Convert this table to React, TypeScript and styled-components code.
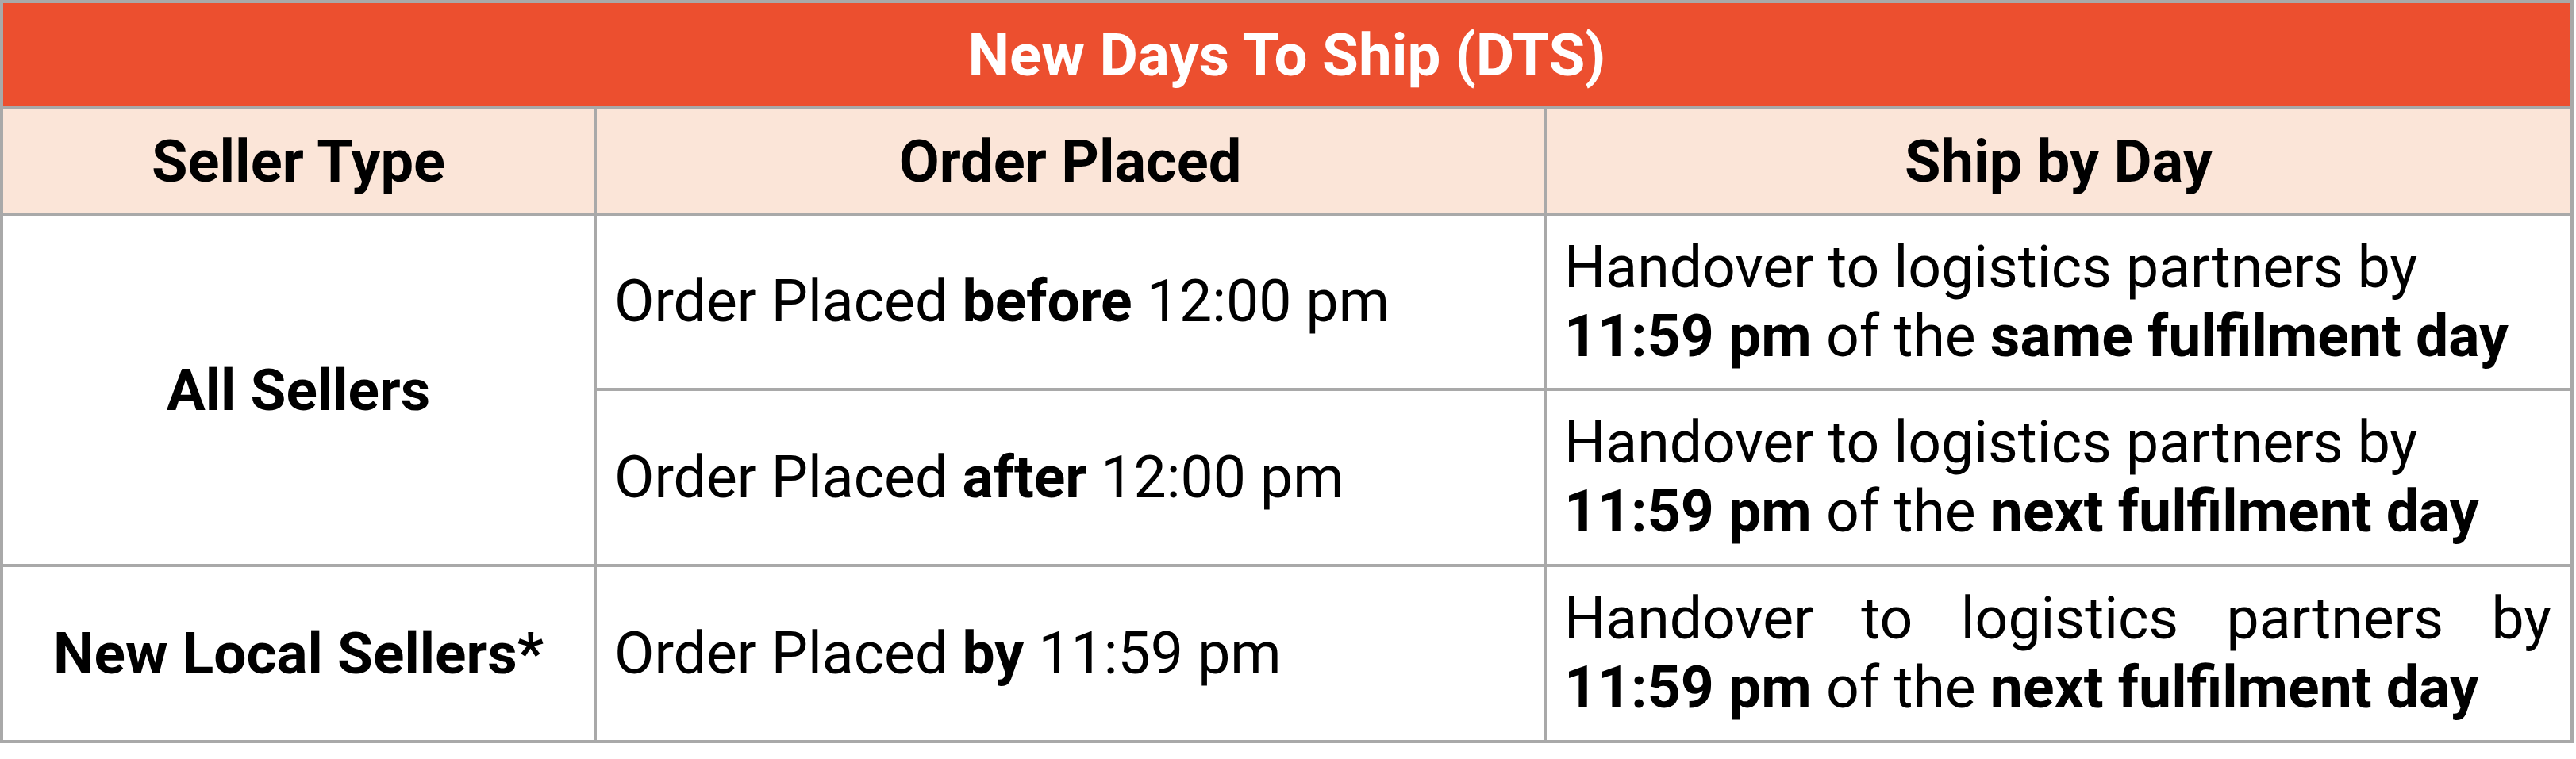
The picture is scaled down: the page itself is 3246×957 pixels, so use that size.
import styled, { createGlobalStyle } from "styled-components";

const GlobalStyle = createGlobalStyle`
  html, body {
    margin: 0;
    padding: 0;
    background: #ffffff;
  }
  body {
    font-family: Roboto, "Liberation Sans", Arial, sans-serif;
    color: #000000;
  }
`;

const Grid = styled.div`
  display: grid;
  width: 3243px;
  box-sizing: border-box;
  grid-template-columns: 744px 1193px 1290px;
  grid-template-rows: 130px 130px 217px 218px 218px;
  gap: 4px;
  padding: 4px;
  background: #a9a9a9;
`;

const TitleCell = styled.div`
  grid-column: 1 / -1;
  background: #ec4f2f;
  color: #ffffff;
  display: flex;
  align-items: center;
  justify-content: center;
  font-size: 74.5px;
  font-weight: 700;
`;

const HeadCell = styled.div`
  background: #fbe5d8;
  display: flex;
  align-items: center;
  justify-content: center;
  font-size: 74px;
  font-weight: 700;
`;

const TypeCell = styled.div<{ $span: number }>`
  grid-row: span ${({ $span }) => $span};
  background: #ffffff;
  display: flex;
  align-items: center;
  justify-content: center;
  font-size: 73px;
  font-weight: 700;
`;

const Cell = styled.div`
  background: #ffffff;
  display: flex;
  flex-direction: column;
  justify-content: center;
  padding: 0 24px 0 22px;
  font-size: 73.3px;
  line-height: 87px;
  font-weight: 400;
`;

const Line = styled.span<{ $justify?: boolean }>`
  display: block;
  white-space: nowrap;
  text-align: ${({ $justify }) => ($justify ? "justify" : "left")};
  text-align-last: ${({ $justify }) => ($justify ? "justify" : "left")};
`;

const B = styled.b`
  font-weight: 700;
`;

function Handover({ when, justify }: { when: string; justify?: boolean }) {
  return (
    <Cell>
      <Line $justify={justify}>Handover to logistics partners by</Line>
      <Line>
        <B>11:59 pm</B> of the <B>{when} fulfilment day</B>
      </Line>
    </Cell>
  );
}

export default function App() {
  return (
    <>
      <GlobalStyle />
      <Grid>
        <TitleCell>New Days To Ship (DTS)</TitleCell>
        <HeadCell>Seller Type</HeadCell>
        <HeadCell>Order Placed</HeadCell>
        <HeadCell>Ship by Day</HeadCell>

        <TypeCell $span={2}>All Sellers</TypeCell>
        <Cell>
          <Line>
            Order Placed <B>before</B> 12:00 pm
          </Line>
        </Cell>
        <Handover when="same" />
        <Cell>
          <Line>
            Order Placed <B>after</B> 12:00 pm
          </Line>
        </Cell>
        <Handover when="next" />

        <TypeCell $span={1}>New Local Sellers*</TypeCell>
        <Cell>
          <Line>
            Order Placed <B>by</B> 11:59 pm
          </Line>
        </Cell>
        <Handover when="next" justify />
      </Grid>
    </>
  );
}
